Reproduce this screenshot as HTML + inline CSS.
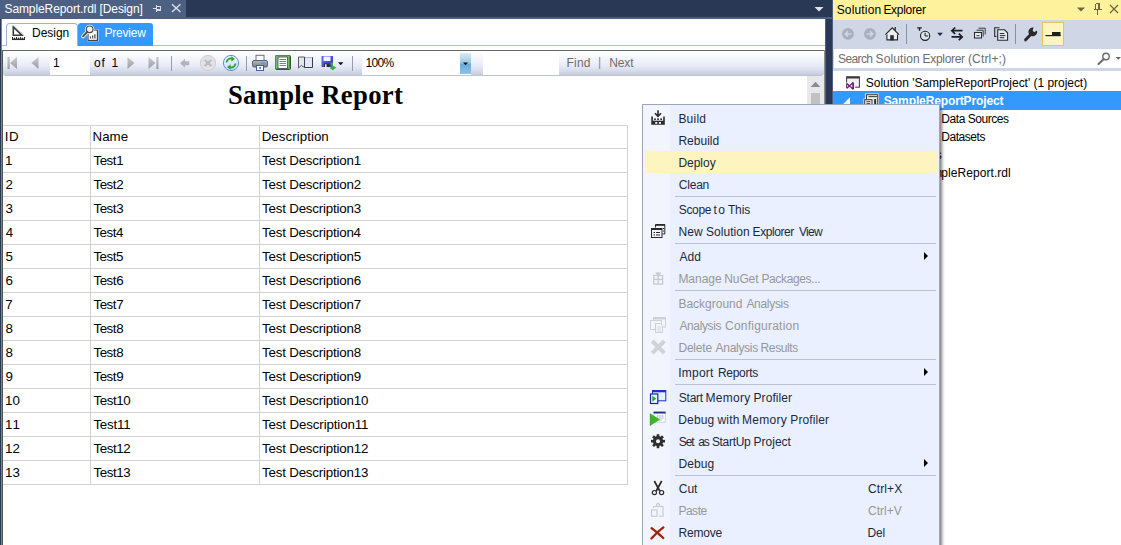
<!DOCTYPE html>
<html>
<head>
<meta charset="utf-8">
<title>SampleReport.rdl [Design]</title>
<style>
html,body{margin:0;padding:0;}
body{width:1121px;height:545px;overflow:hidden;background:#293955;position:relative;font-family:"Liberation Sans",sans-serif;font-size:12px;color:#000;}
#menu .t{color:#1b293e;}
#menu .t.dis{color:#96979a;}
.a{position:absolute;}
.t{position:absolute;white-space:nowrap;line-height:16px;height:16px;}
svg{position:absolute;overflow:visible;}
#doc{left:3px;top:19px;width:822px;height:526px;background:#fff;}
#doctab{left:0;top:0;width:186px;height:19px;background:#4d6082;}
#tb{left:3px;top:50px;width:821px;height:26px;background:linear-gradient(#ffffff 0%,#f4f6fd 30%,#e8ebf8 58%,#d2d7e7 85%,#c4cada 96%,#b4bccb 100%);border-top:1px solid #666;box-sizing:border-box;border-radius:0 0 3px 3px;}
#grid{left:3px;top:124px;width:625px;height:361px;}
.hl{position:absolute;left:0;width:625px;height:1px;background:#d3d3d3;}
.vl{position:absolute;top:1px;width:1px;height:360px;background:#d3d3d3;}
#se{left:833px;top:0;width:288px;height:545px;background:#fff;}
#setitle{left:0;top:0;width:288px;height:20px;background:#fff29d;}
#setb{left:0;top:20px;width:288px;height:51px;background:#cfd6e5;}
#sesearch{left:1px;top:49px;width:287px;height:19px;background:#fff;}
#sesel{left:0;top:91px;width:288px;height:19px;background:#3399ff;}
#menu{left:642px;top:104px;width:298px;height:460px;background:#eaf0ff;border:1px solid #9ba7b7;box-sizing:border-box;box-shadow:3px 3px 3px -1px rgba(0,0,0,.5);}
.dis{color:#a2a4a5;}
.sep{position:absolute;left:32px;width:261px;height:1px;background:#bec3cb;}
.arr{position:absolute;left:281px;width:0;height:0;border-left:4px solid #000;border-top:4px solid transparent;border-bottom:4px solid transparent;}
</style>
</head>
<body>
<!-- document window -->
<div id="doctab" class="a"></div>
<div class="t" style="left:4.50px;top:1px;letter-spacing:-0.100px;color:#fff;">SampleReport.rdl [Design]</div>
<svg style="left:0;top:0" width="830" height="19" viewBox="0 0 830 19">
 <!-- pin -->
 <g stroke="#d7dce8" stroke-width="1" fill="none" shape-rendering="crispEdges">
  <path d="M153 8.5H156.5M156.5 5V12M156.5 6.5H160.5V10.5H156.5M156.5 9.5H160"/>
 </g>
 <!-- close -->
 <path d="M172 4.2L180.4 12M180.4 4.2L172 12" stroke="#d7dce8" stroke-width="1.5" fill="none"/>
 <!-- dropdown -->
 <path d="M814.5 7H823.5L819 11.5Z" fill="#dfe4ee"/>
</svg>

<div class="a" style="left:0;top:17px;width:833px;height:2px;background:#4d6082;"></div>
<div class="a" style="left:1px;top:19px;width:1px;height:526px;background:#6d83b5;"></div>
<div class="a" style="left:825px;top:19px;width:1px;height:526px;background:#4d6082;"></div>
<div class="a" style="left:832px;top:0;width:1px;height:545px;background:#4d6082;"></div>
<div class="a" style="left:2px;top:19px;width:1px;height:31px;background:#fff;"></div>
<div class="a" style="left:2px;top:50px;width:1px;height:495px;background:#555;"></div>
<div id="doc" class="a"></div>
<div class="a" style="left:824px;top:50px;width:1px;height:495px;background:#8e8e8e;"></div>
<div class="a" style="left:2px;top:45px;width:823px;height:1px;background:#b4c0d6;"></div>
<div class="a" style="left:78px;top:23px;width:75px;height:23px;background:#3399ff;border-radius:3px 3px 0 0;"></div>
<div class="a" style="left:6px;top:23px;width:72px;height:23px;background:#fff;border:1px solid #9fb0cb;border-bottom:none;border-radius:4px 4px 0 0;box-sizing:border-box;"></div>
<svg style="left:0;top:19px" width="160" height="30" viewBox="0 19 160 30">
 <!-- design icon: set square + ruler -->
 <path d="M13.3 27V35.3H22Z" fill="#fff" stroke="#3a3a3a" stroke-width="1.6" stroke-linejoin="miter"/>
 <path d="M13.5 25.5L23.5 35" stroke="#b9b9b9" stroke-width="1"/>
 <path d="M12 39.3H25" stroke="#2a2a2a" stroke-width="1.5"/>
 <path d="M12.5 37v2M14.5 37.6v1.4M16.5 37v2M18.5 37.6v1.4M20.5 37v2M22.5 37.6v1.4M24.5 37v2" stroke="#2a2a2a" stroke-width="1"/>
 <!-- preview icon: document + magnifier -->
 <rect x="87" y="29" width="11.4" height="12.2" fill="#fff"/>
 <rect x="88" y="30" width="9.4" height="10.4" fill="#fff" stroke="#3a3a3a" stroke-width="1.1"/>
 <path d="M90.5 38.6v-2.2M92.7 38.6v-3.2M94.9 38.6v-4.4" stroke="#444" stroke-width="1.2"/>
 <path d="M87 32.3L83 36.5" stroke="#fff" stroke-width="3.6" stroke-linecap="round"/>
 <circle cx="89.7" cy="29.3" r="4.6" fill="#fff"/>
 <circle cx="89.7" cy="29.3" r="3.3" fill="#f4f6fa" stroke="#4a4a4a" stroke-width="1.2"/>
 <path d="M87.2 32L83 36.4" stroke="#4a4a4a" stroke-width="1.9" stroke-linecap="round"/>
</svg>

<div class="t" style="left:32.00px;top:24.5px;letter-spacing:-0.020px;">Design</div>
<div class="t" style="left:104.50px;top:24.5px;letter-spacing:-0.200px;color:#fff;">Preview</div>
<div id="tb" class="a"></div>
<div class="a" style="left:50px;top:51px;width:40px;height:24px;background:#fff;"></div>
<div class="a" style="left:362px;top:51px;width:109px;height:24px;background:#fff;"></div>
<div class="a" style="left:460px;top:53px;width:11px;height:21px;background:linear-gradient(#dcebf7,#9cc7e6 45%,#6aaad6 55%,#8fc3e8);"></div>
<div class="a" style="left:483px;top:51px;width:76px;height:24px;background:#fff;"></div>
<svg style="left:0;top:48px" width="480" height="30" viewBox="0 48 480 30">
 <defs>
  <linearGradient id="gg" x1="0" y1="0" x2="0" y2="1"><stop offset="0" stop-color="#c9c9cf"/><stop offset="1" stop-color="#9b9ba3"/></linearGradient>
  <linearGradient id="gb" x1="0" y1="0" x2="0" y2="1"><stop offset="0" stop-color="#f4f9ff"/><stop offset="1" stop-color="#c4dbf7"/></linearGradient>
  <linearGradient id="gp" x1="0" y1="0" x2="0" y2="1"><stop offset="0" stop-color="#b8bcc6"/><stop offset="1" stop-color="#767b88"/></linearGradient>
  <linearGradient id="gs" x1="0" y1="0" x2="1" y2="1"><stop offset="0" stop-color="#6a70ea"/><stop offset="1" stop-color="#2f32b8"/></linearGradient>
 </defs>
 <!-- first / prev / next / last -->
 <rect x="7.5" y="57" width="2.2" height="12" fill="url(#gg)"/>
 <path d="M17 57V69L10 63Z" fill="url(#gg)"/>
 <path d="M38.5 57V69L31.5 63Z" fill="url(#gg)"/>
 <path d="M127.5 57V69L134.5 63Z" fill="url(#gg)"/>
 <path d="M148.5 57V69L155.5 63Z" fill="url(#gg)"/>
 <rect x="156.3" y="57" width="2.2" height="12" fill="url(#gg)"/>
 <!-- separators -->
 <rect x="171" y="56" width="1" height="15" fill="#9a9cae"/>
 <rect x="246" y="56" width="1" height="15" fill="#9a9cae"/>
 <rect x="352" y="56" width="1" height="15" fill="#9a9cae"/>
 <!-- back -->
 <path d="M180 63.2L185 58.7V61.2H189.3V65.2H185V67.8Z" fill="#b4b4b8"/>
 <!-- stop -->
 <circle cx="208" cy="63" r="7.6" fill="#e3e3e6" stroke="#cdcdd2" stroke-width="1"/>
 <path d="M204.8 60L211.2 66M211.2 60L204.8 66" stroke="#b9b9be" stroke-width="2.2"/>
 <!-- refresh -->
 <circle cx="231" cy="63" r="7.6" fill="url(#gb)" stroke="#5b8edb" stroke-width="1"/>
 <path d="M226.5 62.5A4.5 4.5 0 0 1 232 58.6" stroke="#2ea12e" stroke-width="1.8" fill="none"/>
 <path d="M231.3 56.3L235 59L231.3 61.5Z" fill="#2ea12e"/>
 <path d="M235.5 63.5A4.5 4.5 0 0 1 230 67.4" stroke="#2ea12e" stroke-width="1.8" fill="none"/>
 <path d="M230.7 69.7L227 67L230.7 64.5Z" fill="#2ea12e"/>
 <!-- printer -->
 <rect x="256" y="55.3" width="8" height="6" fill="#fff" stroke="#6a7180" stroke-width="1"/>
 <rect x="252.5" y="60.5" width="15" height="6.5" rx="1.5" fill="url(#gp)" stroke="#5d6270" stroke-width="1"/>
 <rect x="261" y="62.3" width="4" height="1.4" fill="#4d9cf0"/>
 <rect x="256.5" y="65.5" width="7" height="5" fill="#fff" stroke="#4a5f9a" stroke-width="1"/>
 <rect x="259.2" y="67" width="1.8" height="1.8" fill="#3a6ad0"/>
 <!-- print layout -->
 <rect x="275.5" y="55.5" width="15" height="14" rx="1" fill="#6aa85a" stroke="#2f5a2c" stroke-width="1"/>
 <rect x="275.5" y="55.5" width="14" height="13" rx="1" fill="#7db96c" stroke="#4d8f43" stroke-width="1"/>
 <rect x="278" y="57" width="9.5" height="11.5" fill="#fff" stroke="#3e4a66" stroke-width=".8"/>
 <path d="M279.5 59.5h6.5M279.5 61.5h6.5M279.5 63.5h6.5M279.5 65.5h6.5" stroke="#5a74b8" stroke-width=".9"/>
 <!-- page setup (book) -->
 <path d="M298.5 57V68L301.3 65.5L304.5 67.5V57Z" fill="#e4e6ea" stroke="#555c6a" stroke-width="1"/>
 <path d="M304.5 57.5H312.5V67.5H304.5Z" fill="#dfe9fb" stroke="#3a3f4a" stroke-width="1"/>
 <path d="M305 57.5H312" stroke="#aab4c8" stroke-width="1"/>
 <!-- export (save) -->
 <path d="M321.5 56H333V67H321.5Z" fill="url(#gs)"/>
 <rect x="323.5" y="56.5" width="7" height="4.5" fill="#f4f6ff"/>
 <rect x="324" y="63.5" width="5.5" height="3.5" fill="#2a2a3a"/>
 <rect x="325" y="64.2" width="1.6" height="2.8" fill="#dfe3f5"/>
 <path d="M330.5 62.5L333 62.5L333 66L336.3 67.2L333 70.3L329.5 68L331.5 67Z" fill="#2fae3a"/>
 <path d="M338 62.3H343.4L340.7 65.2Z" fill="#111"/>
 <!-- combo arrow -->
 <path d="M463 62.5H468L465.5 65.3Z" fill="#111"/>
</svg>

<div class="t" style="left:53.10px;top:54.5px;">1</div>
<div class="t" style="left:94.00px;top:54.5px;letter-spacing:0.900px;">of</div>
<div class="t" style="left:111.60px;top:54.5px;">1</div>
<div class="t" style="left:365.60px;top:54.5px;letter-spacing:-0.733px;">100%</div>
<div class="t" style="left:566.50px;top:54.5px;letter-spacing:0.233px;color:#6d6d6d;">Find</div>
<div class="t" style="left:598.00px;top:53.5px;color:#8a8a8a;">|</div>
<div class="t" style="left:609.30px;top:54.5px;letter-spacing:-0.133px;color:#6d6d6d;">Next</div>
<div class="t" style="left:227.90px;top:87px;letter-spacing:0.325px;font-size:26.67px;font-weight:bold;font-family:'Liberation Serif',serif;line-height:30px;height:30px;margin-top:-7px;">Sample Report</div>
<div id="grid" class="a">
<div class="hl" style="top:1px"></div>
<div class="hl" style="top:24px"></div>
<div class="hl" style="top:48px"></div>
<div class="hl" style="top:72px"></div>
<div class="hl" style="top:96px"></div>
<div class="hl" style="top:120px"></div>
<div class="hl" style="top:144px"></div>
<div class="hl" style="top:168px"></div>
<div class="hl" style="top:192px"></div>
<div class="hl" style="top:216px"></div>
<div class="hl" style="top:240px"></div>
<div class="hl" style="top:264px"></div>
<div class="hl" style="top:288px"></div>
<div class="hl" style="top:312px"></div>
<div class="hl" style="top:336px"></div>
<div class="hl" style="top:360px"></div>
<div class="vl" style="left:87px"></div>
<div class="vl" style="left:256px"></div>
<div class="vl" style="left:624px"></div>
</div>
<div class="t" style="left:4.80px;top:128.5px;letter-spacing:0.500px;font-size:13.33px;">ID</div>
<div class="t" style="left:92.60px;top:128.5px;letter-spacing:-0.033px;font-size:13.33px;">Name</div>
<div class="t" style="left:261.70px;top:128.5px;letter-spacing:0.040px;font-size:13.33px;">Description</div>
<div class="t" style="left:5.00px;top:152.5px;font-size:13.33px;">1</div>
<div class="t" style="left:93.40px;top:152.5px;letter-spacing:-0.427px;font-size:13.33px;">Test1</div>
<div class="t" style="left:262.00px;top:152.5px;letter-spacing:-0.188px;font-size:13.33px;">Test Description1</div>
<div class="t" style="left:5.40px;top:176.5px;font-size:13.33px;">2</div>
<div class="t" style="left:93.40px;top:176.5px;letter-spacing:-0.427px;font-size:13.33px;">Test2</div>
<div class="t" style="left:262.00px;top:176.5px;letter-spacing:-0.188px;font-size:13.33px;">Test Description2</div>
<div class="t" style="left:5.50px;top:200.5px;font-size:13.33px;">3</div>
<div class="t" style="left:93.40px;top:200.5px;letter-spacing:-0.427px;font-size:13.33px;">Test3</div>
<div class="t" style="left:262.00px;top:200.5px;letter-spacing:-0.188px;font-size:13.33px;">Test Description3</div>
<div class="t" style="left:5.70px;top:224.5px;font-size:13.33px;">4</div>
<div class="t" style="left:93.40px;top:224.5px;letter-spacing:-0.478px;font-size:13.33px;">Test4</div>
<div class="t" style="left:262.00px;top:224.5px;letter-spacing:-0.201px;font-size:13.33px;">Test Description4</div>
<div class="t" style="left:5.50px;top:248.5px;font-size:13.33px;">5</div>
<div class="t" style="left:93.40px;top:248.5px;letter-spacing:-0.452px;font-size:13.33px;">Test5</div>
<div class="t" style="left:262.00px;top:248.5px;letter-spacing:-0.194px;font-size:13.33px;">Test Description5</div>
<div class="t" style="left:5.40px;top:272.5px;font-size:13.33px;">6</div>
<div class="t" style="left:93.40px;top:272.5px;letter-spacing:-0.427px;font-size:13.33px;">Test6</div>
<div class="t" style="left:262.00px;top:272.5px;letter-spacing:-0.188px;font-size:13.33px;">Test Description6</div>
<div class="t" style="left:5.30px;top:296.5px;font-size:13.33px;">7</div>
<div class="t" style="left:93.40px;top:296.5px;letter-spacing:-0.427px;font-size:13.33px;">Test7</div>
<div class="t" style="left:262.00px;top:296.5px;letter-spacing:-0.188px;font-size:13.33px;">Test Description7</div>
<div class="t" style="left:5.40px;top:320.5px;font-size:13.33px;">8</div>
<div class="t" style="left:93.40px;top:320.5px;letter-spacing:-0.427px;font-size:13.33px;">Test8</div>
<div class="t" style="left:262.00px;top:320.5px;letter-spacing:-0.188px;font-size:13.33px;">Test Description8</div>
<div class="t" style="left:5.40px;top:344.5px;font-size:13.33px;">8</div>
<div class="t" style="left:93.40px;top:344.5px;letter-spacing:-0.427px;font-size:13.33px;">Test8</div>
<div class="t" style="left:262.00px;top:344.5px;letter-spacing:-0.188px;font-size:13.33px;">Test Description8</div>
<div class="t" style="left:5.40px;top:368.5px;font-size:13.33px;">9</div>
<div class="t" style="left:93.40px;top:368.5px;letter-spacing:-0.427px;font-size:13.33px;">Test9</div>
<div class="t" style="left:262.00px;top:368.5px;letter-spacing:-0.188px;font-size:13.33px;">Test Description9</div>
<div class="t" style="left:5.00px;top:392.5px;letter-spacing:0.080px;font-size:13.33px;">10</div>
<div class="t" style="left:93.40px;top:392.5px;letter-spacing:-0.404px;font-size:13.33px;">Test10</div>
<div class="t" style="left:262.00px;top:392.5px;letter-spacing:-0.195px;font-size:13.33px;">Test Description10</div>
<div class="t" style="left:5.00px;top:416.5px;letter-spacing:1.180px;font-size:13.33px;">11</div>
<div class="t" style="left:93.40px;top:416.5px;letter-spacing:-0.184px;font-size:13.33px;">Test11</div>
<div class="t" style="left:262.00px;top:416.5px;letter-spacing:-0.131px;font-size:13.33px;">Test Description11</div>
<div class="t" style="left:5.00px;top:440.5px;letter-spacing:0.180px;font-size:13.33px;">12</div>
<div class="t" style="left:93.40px;top:440.5px;letter-spacing:-0.384px;font-size:13.33px;">Test12</div>
<div class="t" style="left:262.00px;top:440.5px;letter-spacing:-0.189px;font-size:13.33px;">Test Description12</div>
<div class="t" style="left:5.00px;top:464.5px;letter-spacing:0.180px;font-size:13.33px;">13</div>
<div class="t" style="left:93.40px;top:464.5px;letter-spacing:-0.384px;font-size:13.33px;">Test13</div>
<div class="t" style="left:262.00px;top:464.5px;letter-spacing:-0.189px;font-size:13.33px;">Test Description13</div>
<div class="a" style="left:807px;top:76px;width:17px;height:469px;background:#e8e8ec;"></div>
<div class="a" style="left:811px;top:93px;width:9px;height:452px;background:#c1c1c1;"></div>
<svg style="left:807px;top:76px" width="17" height="17" viewBox="807 76 17 17"><path d="M810.6 87L815.5 81.8L820.4 87Z" fill="#8a8a99"/></svg>

<!-- solution explorer -->
<div id="se" class="a"><div id="setitle" class="a"></div><div id="setb" class="a"></div><div id="sesearch" class="a"></div><div id="sesel" class="a"></div></div>
<div class="t" style="left:0;top:1.5px;"><span style="position:absolute;white-space:pre;left:836.70px;letter-spacing:0.157px">Solution </span><span style="position:absolute;white-space:pre;left:883.40px;letter-spacing:-0.300px">Explorer</span></div>
<div class="t" style="left:0;top:50.5px;color:#6d6d6d;"><span style="position:absolute;white-space:pre;left:838.00px;letter-spacing:-0.600px">Search </span><span style="position:absolute;white-space:pre;left:875.60px;letter-spacing:0.086px">Solution </span><span style="position:absolute;white-space:pre;left:922.60px;letter-spacing:-0.314px">Explorer </span><span style="position:absolute;white-space:pre;left:967.90px;letter-spacing:0.171px">(Ctrl+;)</span></div>
<div class="t" style="left:865.80px;top:74.5px;letter-spacing:-0.032px;">Solution 'SampleReportProject' (1 project)</div>
<div class="t" style="left:883.70px;top:92.5px;letter-spacing:-0.122px;color:#fff;font-weight:bold;">SampleReportProject</div>
<div class="t" style="left:902.50px;top:111px;letter-spacing:-0.456px;">Shared Data Sources</div>
<div class="t" style="left:902.50px;top:129px;letter-spacing:-0.464px;">Shared Datasets</div>
<div class="t" style="left:902.00px;top:147px;letter-spacing:-0.383px;">Reports</div>
<div class="t" style="left:921.50px;top:165px;letter-spacing:-1.950px;">Sam</div>
<div class="t" style="left:941.20px;top:165px;letter-spacing:0.075px;">pleReport.rdl</div>
<svg style="left:833px;top:0" width="288" height="200" viewBox="833 0 288 200">
 <!-- title buttons -->
 <path d="M1077 7.5H1085L1081 11.5Z" fill="#75633d"/>
 <g stroke="#75633d" fill="none" stroke-width="1" shape-rendering="crispEdges">
  <path d="M1095.5 3.5H1099.5V9.5M1095.5 3.5V9.5M1098.5 4V9.5M1093.5 9.5H1101.5M1097.5 10V15"/>
 </g>
 <path d="M1110 5L1118 13M1118 5L1110 13" stroke="#75633d" stroke-width="1.3" fill="none"/>
 <!-- back / forward (disabled) -->
 <circle cx="848" cy="33.9" r="5.9" fill="#a9afbc"/>
 <path d="M851.5 33.9H845.5M848 31.2L845.2 33.9L848 36.6" stroke="#cfd6e5" stroke-width="1.5" fill="none"/>
 <circle cx="870" cy="33.9" r="5.9" fill="#a9afbc"/>
 <path d="M866.5 33.9H872.5M870 31.2L872.8 33.9L870 36.6" stroke="#cfd6e5" stroke-width="1.5" fill="none"/>
 <!-- home -->
 <path d="M886.9 34V39.9H897.5V34" fill="#ececf3" stroke="#2a2a2a" stroke-width="1.1"/>
 <path d="M885.4 34.6L892.2 27.9L899 34.6" fill="#ececf3" stroke="#2a2a2a" stroke-width="1.25" stroke-linejoin="miter"/>
 <path d="M895.2 27V30.5" stroke="#1e1e1e" stroke-width="1.2"/>
 <rect x="890.2" y="35.2" width="3.6" height="5.2" fill="#2a2a2a"/>
 <!-- separators -->
 <rect x="906" y="24" width="1" height="20" fill="#8591a9"/>
 <rect x="1015" y="24" width="1" height="20" fill="#8591a9"/>
 <!-- pending changes filter -->
 <path d="M917.2 27.3H921.8V28.6H920.2V30.8H918.8V28.6H917.2Z" fill="#1e1e1e"/>
 <circle cx="925.1" cy="35.8" r="4.6" fill="#dde2ee" stroke="#1e1e1e" stroke-width="1.1"/>
 <path d="M925.1 32.8V36H928" stroke="#1e1e1e" stroke-width="1" fill="none"/>
 <path d="M937.2 32.8H942.9L940 36Z" fill="#1b2a4a"/>
 <!-- sync -->
 <path d="M952 30.7H962.5M955.2 27.5L951.8 30.7L955.2 34" stroke="#1e1e1e" stroke-width="1.7" fill="none"/>
 <path d="M951.5 36.9H962M958.8 33.6L962.2 36.9L958.8 40.2" stroke="#1e1e1e" stroke-width="1.7" fill="none"/>
 <!-- collapse all -->
 <path d="M978.5 28.2H985.2V34.5" stroke="#3c3c3c" stroke-width="1" fill="none"/>
 <path d="M976.5 30.2H983.2V36.5" stroke="#3c3c3c" stroke-width="1" fill="none"/>
 <rect x="974.5" y="32.5" width="7" height="5.5" fill="#eef0f7" stroke="#2a2a2a" stroke-width="1.1"/>
 <rect x="976.5" y="35" width="3" height="1.2" fill="#1a4fc0"/>
 <!-- show all files -->
 <path d="M999.5 27.7H994.7V36.5H996.5" stroke="#2a2a2a" stroke-width="1.1" fill="none"/>
 <path d="M997.7 29.8H1004.5L1007.6 32.8V40.2H997.7Z" fill="#e6e9f2" stroke="#2a2a2a" stroke-width="1.1"/>
 <path d="M999.8 33.5h4.5M999.8 35.6h5.6M999.8 37.7h4.5" stroke="#2a2a2a" stroke-width="1"/>
 <!-- properties (wrench) -->
 <path d="M1025.6 39.8L1032 33.2" stroke="#2a2a2a" stroke-width="3" stroke-linecap="round"/>
 <path d="M1037 30.6A4.4 4.4 0 1 1 1033.6 27.6L1032.6 30.6L1034.2 32.2Z" fill="#2a2a2a"/>
 <!-- preview selected items (active) -->
 <rect x="1042.5" y="22.5" width="21" height="23" fill="#fdf4bf" stroke="#e5c365" stroke-width="1"/>
 <rect x="1045.5" y="35" width="15" height="1.2" fill="#1e1e1e"/>
 <rect x="1052" y="32" width="8.5" height="4" fill="#1e1e1e"/>
 <!-- search -->
 <circle cx="1106" cy="56.5" r="3.2" fill="none" stroke="#6a6a6a" stroke-width="1.4"/>
 <path d="M1103.8 59L1098.5 64" stroke="#6a6a6a" stroke-width="2" stroke-linecap="round"/>
 <path d="M1115.5 57H1121L1118.3 59.8Z" fill="#6a6a6a"/>
 <!-- solution icon -->
 <path d="M847 78V82.6H859V78Z" fill="#f1f1f1"/>
 <path d="M853 82H859V87H853Z" fill="#f1f1f1"/>
 <path d="M846.6 78V82.6M859.4 78V87.2M859.9 87.2H855.1" stroke="#3a3a3a" stroke-width="1" fill="none"/>
 <rect x="846.1" y="76.2" width="13.8" height="2.3" fill="#3a3a3a"/>
 <path d="M846.1 83.6L847.3 83L849.6 85L852.6 82L854 82.7V89L852.6 89.7L849.6 86.8L847.3 88.7L846.1 88.1ZM852.3 84.3L850.5 85.9L852.3 87.5ZM847.1 84.7V87L848.4 85.9Z" fill="#68217a" fill-rule="evenodd"/>
 <!-- project row: expander + icon -->
 <path d="M850 97.3V105H842.3Z" fill="#fff"/>
 <rect x="865.2" y="93.5" width="13.6" height="14" fill="#f4f1e8"/>
 <rect x="863.5" y="98.5" width="9.5" height="9" fill="#f4f1e8"/>
 <rect x="866.5" y="94.7" width="11.2" height="12" fill="#ecebe6" stroke="#3a3a3a" stroke-width="1"/>
 <path d="M868.4 96.6H877" stroke="#3a3a3a" stroke-width="1"/>
 <rect x="874.2" y="99" width="1.9" height="7" fill="#2a2a2a"/>
 <rect x="864.7" y="99.7" width="7.3" height="8" fill="#ecebe6" stroke="#3a3a3a" stroke-width="1"/>
 <path d="M866.5 101.7h3.8M866.5 103.7h3.8" stroke="#3a3a3a" stroke-width="1"/>
 <!-- child rows (mostly hidden by the menu) -->
 <path d="M870.5 115.5L874.5 118.5L870.5 121.5Z" fill="none" stroke="#444" stroke-width="1"/>
 <path d="M870.5 133.5L874.5 136.5L870.5 139.5Z" fill="none" stroke="#444" stroke-width="1"/>
 <path d="M875 150.5V156H869.5Z" fill="#444"/>
 <path d="M883.5 114.5H888L889.5 116H897.5V123.5H883.5Z" fill="#dcb67a" stroke="#b58e49" stroke-width="1"/>
 <path d="M883.5 132.5H888L889.5 134H897.5V141.5H883.5Z" fill="#dcb67a" stroke="#b58e49" stroke-width="1"/>
 <path d="M883.5 150.5H888L889.5 152H897.5V159.5H883.5Z" fill="#dcb67a" stroke="#b58e49" stroke-width="1"/>
 <path d="M904.5 166.5H911L914.5 170V179.5H904.5Z" fill="#fff" stroke="#555" stroke-width="1"/>
</svg>

<!-- context menu -->
<div id="menu" class="a">
<div class="a" style="left:0;top:0;width:27px;height:445px;background:#f2f4fe;"></div>
<div class="a" style="left:2px;top:46px;width:292px;height:22px;background:#fdf4bf;"></div>
<div class="sep" style="top:91px"></div>
<div class="sep" style="top:138px"></div>
<div class="sep" style="top:185px"></div>
<div class="sep" style="top:254px"></div>
<div class="sep" style="top:279px"></div>
<div class="sep" style="top:370px"></div>
<div class="t" style="left:35.40px;top:6px;letter-spacing:0.225px;">Build</div>
<div class="t" style="left:35.40px;top:28px;letter-spacing:0.017px;">Rebuild</div>
<div class="t" style="left:35.40px;top:50px;letter-spacing:-0.020px;">Deploy</div>
<div class="t" style="left:35.80px;top:72px;letter-spacing:-0.225px;">Clean</div>
<div class="t" style="left:0;top:97px;"><span style="position:absolute;white-space:pre;left:35.80px;letter-spacing:-0.350px">Scope </span><span style="position:absolute;white-space:pre;left:70.60px;letter-spacing:1.300px">to </span><span style="position:absolute;white-space:pre;left:84.90px;letter-spacing:-0.133px">This</span></div>
<div class="t" style="left:0;top:119px;"><span style="position:absolute;white-space:pre;left:35.40px;letter-spacing:0.150px">New </span><span style="position:absolute;white-space:pre;left:62.90px;letter-spacing:0.057px">Solution </span><span style="position:absolute;white-space:pre;left:109.60px;letter-spacing:-0.429px">Explorer </span><span style="position:absolute;white-space:pre;left:155.90px;letter-spacing:-0.633px">View</span></div>
<div class="t" style="left:36.40px;top:144px;letter-spacing:0.100px;">Add</div>
<div class="t dis" style="left:0;top:166px;"><span style="position:absolute;white-space:pre;left:35.40px;letter-spacing:-0.020px">Manage </span><span style="position:absolute;white-space:pre;left:81.30px;letter-spacing:-0.125px">NuGet </span><span style="position:absolute;white-space:pre;left:118.40px;letter-spacing:-0.360px">Packages...</span></div>
<div class="t dis" style="left:0;top:191px;"><span style="position:absolute;white-space:pre;left:35.40px;letter-spacing:0.000px">Background </span><span style="position:absolute;white-space:pre;left:103.40px;letter-spacing:-0.300px">Analysis</span></div>
<div class="t dis" style="left:0;top:213px;"><span style="position:absolute;white-space:pre;left:36.40px;letter-spacing:-0.371px">Analysis </span><span style="position:absolute;white-space:pre;left:82.10px;letter-spacing:0.217px">Configuration</span></div>
<div class="t dis" style="left:0;top:235px;"><span style="position:absolute;white-space:pre;left:35.40px;letter-spacing:-0.180px">Delete </span><span style="position:absolute;white-space:pre;left:72.60px;letter-spacing:-0.300px">Analysis </span><span style="position:absolute;white-space:pre;left:117.60px;letter-spacing:-0.400px">Results</span></div>
<div class="t" style="left:0;top:260px;"><span style="position:absolute;white-space:pre;left:35.30px;letter-spacing:0.220px">Import </span><span style="position:absolute;white-space:pre;left:74.90px;letter-spacing:-0.283px">Reports</span></div>
<div class="t" style="left:0;top:285px;"><span style="position:absolute;white-space:pre;left:35.80px;letter-spacing:-0.250px">Start </span><span style="position:absolute;white-space:pre;left:62.40px;letter-spacing:0.300px">Memory </span><span style="position:absolute;white-space:pre;left:110.50px;letter-spacing:0.086px">Profiler</span></div>
<div class="t" style="left:0;top:307px;"><span style="position:absolute;white-space:pre;left:35.30px;letter-spacing:0.125px">Debug </span><span style="position:absolute;white-space:pre;left:74.40px;letter-spacing:0.267px">with </span><span style="position:absolute;white-space:pre;left:99.10px;letter-spacing:0.240px">Memory </span><span style="position:absolute;white-space:pre;left:147.30px;letter-spacing:0.086px">Profiler</span></div>
<div class="t" style="left:0;top:329px;"><span style="position:absolute;white-space:pre;left:35.80px;letter-spacing:-1.100px">Set </span><span style="position:absolute;white-space:pre;left:55.30px;letter-spacing:-1.100px">as </span><span style="position:absolute;white-space:pre;left:68.90px;letter-spacing:-0.317px">StartUp </span><span style="position:absolute;white-space:pre;left:110.50px;letter-spacing:0.017px">Project</span></div>
<div class="t" style="left:35.40px;top:351px;letter-spacing:0.100px;">Debug</div>
<div class="t" style="left:35.80px;top:376px;letter-spacing:-0.050px;">Cut</div>
<div class="t dis" style="left:35.40px;top:398px;letter-spacing:-0.475px;">Paste</div>
<div class="t" style="left:35.40px;top:420px;letter-spacing:-0.160px;">Remove</div>
<div class="t" style="left:225.00px;top:376px;letter-spacing:0.100px;">Ctrl+X</div>
<div class="t dis" style="left:225.00px;top:398px;letter-spacing:0.040px;">Ctrl+V</div>
<div class="t" style="left:224.60px;top:420px;letter-spacing:-0.250px;">Del</div>
<div class="arr" style="top:147px"></div>
<div class="arr" style="top:263px"></div>
<div class="arr" style="top:354px"></div>
<svg style="left:0;top:0" width="40" height="441" viewBox="643 105 40 441">
 <!-- build -->
 <path d="M658 110.3V116M655 113.3L658 116.4L661 113.3" stroke="#2a2a2a" stroke-width="1.6" fill="none"/>
 <path d="M651.3 116.5V124.7H664.8V116.5H663.2V120.8H652.9V116.5Z" fill="#2a2a2a"/>
 <rect x="654.1" y="118.4" width="1.7" height="1.7" fill="#2a2a2a"/><rect x="657.2" y="118.4" width="1.7" height="1.7" fill="#2a2a2a"/><rect x="660.3" y="118.4" width="1.7" height="1.7" fill="#2a2a2a"/>
 <rect x="655.2" y="122" width="2.1" height="1.8" fill="#f2f4fe"/><rect x="658.9" y="122" width="2.1" height="1.8" fill="#f2f4fe"/>
 <!-- new solution explorer view -->
 <path d="M655.5 227.5V224.5H664.8V234H662.5" stroke="#2a2a2a" stroke-width="1" fill="none"/>
 <path d="M655.5 225H665" stroke="#2a2a2a" stroke-width="1.6"/>
 <rect x="651.5" y="228.5" width="10.5" height="9" fill="#f3f4fd" stroke="#2a2a2a" stroke-width="1"/>
 <path d="M651.5 229.2H662" stroke="#2a2a2a" stroke-width="1.6"/>
 <path d="M653.5 232.5h1.5M656 232.5h4M653.5 235h1.5M656 235h4" stroke="#2a2a2a" stroke-width="1.1"/>
 <path d="M663.5 228v1M663.5 230.5v1" stroke="#2a2a2a" stroke-width="1"/>
 <!-- nuget (disabled) -->
 <g stroke="#c9cad0" fill="none" stroke-width="1.3">
  <rect x="653.8" y="275.5" width="8.8" height="8.6"/>
  <path d="M658.2 272V284M653.8 279.3H662.6M655.8 272.5L658.2 275L660.6 272.5"/>
 </g>
 <!-- analysis configuration (disabled) -->
 <g stroke="#cfd1d8" fill="#f3f4fc" stroke-width="1">
  <rect x="653.5" y="317.5" width="12" height="9.5"/>
  <path d="M653.5 318.5H665.5" stroke-width="2"/>
  <rect x="650.5" y="320.5" width="11" height="9"/>
  <path d="M655.5 323.5H660.5L662.5 325.5V332.5H655.5Z"/>
  <path d="M657 327h4M657 329h4M657 331h4" stroke-width=".8"/>
 </g>
 <!-- delete analysis results (disabled) -->
 <path d="M652.2 341L664.4 353.2M664.4 341L652.2 353.2" stroke="#d2d3d8" stroke-width="4"/>
 <!-- start memory profiler -->
 <rect x="652.5" y="390.5" width="13.3" height="10.3" fill="#e6f2ff" stroke="#1f2fd0" stroke-width="1"/>
 <path d="M652.5 391.3H665.8" stroke="#1f2fd0" stroke-width="2"/>
 <rect x="650.5" y="394" width="7.3" height="9.5" fill="#f3f4fd" stroke="#1522b0" stroke-width="1.2"/>
 <path d="M652.3 395.8V401.8L656.3 398.8Z" fill="#1faa1f"/>
 <!-- debug with memory profiler -->
 <rect x="654" y="411.8" width="11.2" height="10.4" fill="#fff" stroke="#b9c7e6" stroke-width=".8"/>
 <path d="M653.6 412.6H665.6" stroke="#1c2a8a" stroke-width="1.8"/>
 <path d="M657 416h7M657 418h7M657 420h5" stroke="#7a8ab8" stroke-width=".8" stroke-dasharray="1.5 .7"/>
 <path d="M650.3 413.6V425.8L660 419.5Z" fill="#3fb52a"/>
 <path d="M650.3 413.6V425.8" stroke="#2a8f1d" stroke-width=".8"/>
 <!-- set as startup (gear) -->
 <g fill="#2e2e2e">
  <circle cx="658" cy="441.2" r="5.1"/>
  <g>
   <rect x="656.7" y="434.2" width="2.6" height="14"/>
   <rect x="656.7" y="434.2" width="2.6" height="14" transform="rotate(45 658 441.2)"/>
   <rect x="656.7" y="434.2" width="2.6" height="14" transform="rotate(90 658 441.2)"/>
   <rect x="656.7" y="434.2" width="2.6" height="14" transform="rotate(135 658 441.2)"/>
  </g>
 </g>
 <circle cx="658" cy="441.2" r="2" fill="#f3f4fd"/>
 <!-- cut -->
 <path d="M654.3 481L659.8 491M661.7 481L656.2 491" stroke="#2a2a2a" stroke-width="1.7" fill="none"/>
 <circle cx="654.4" cy="492.6" r="2.1" fill="none" stroke="#2a2a2a" stroke-width="1.2"/>
 <circle cx="661.6" cy="492.6" r="2.1" fill="none" stroke="#2a2a2a" stroke-width="1.2"/>
 <!-- paste (disabled) -->
 <g stroke="#c8c9cf" fill="none" stroke-width="1.1">
  <path d="M656.5 506.5V504.5L658 503.3L659.5 504.5V506.5"/>
  <path d="M653.5 508V506.5H663V516.3H659"/>
  <rect x="651.5" y="510" width="5.5" height="6.3"/>
 </g>
 <!-- remove -->
 <path d="M651.6 528.2C655 530.5 659.5 534.5 663.3 538M663.4 527.4C659 530.5 654.5 535 651.4 538.4" stroke="#a3200a" stroke-width="2.3" stroke-linecap="round" fill="none"/>
</svg>

</div>
</body>
</html>
